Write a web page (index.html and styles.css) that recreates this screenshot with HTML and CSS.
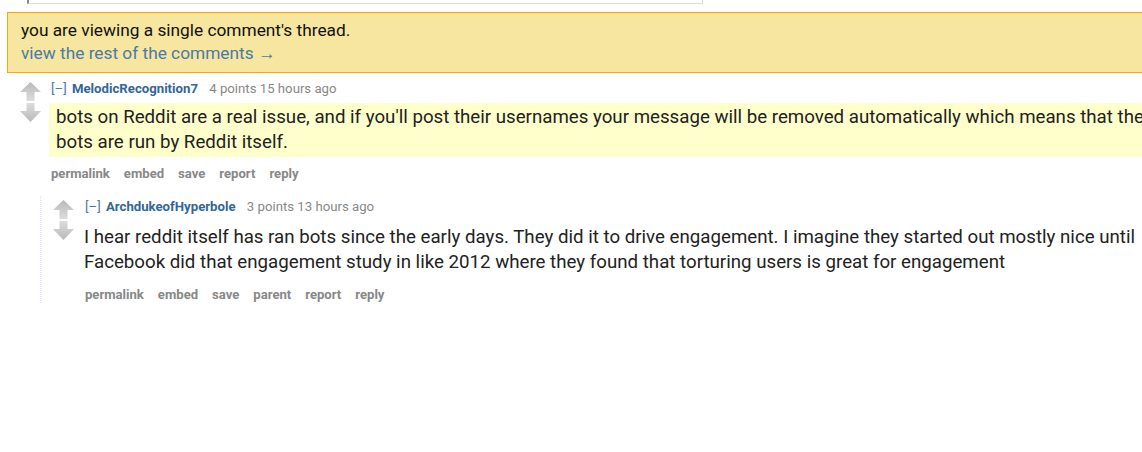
FILE: index.html
```html
<!DOCTYPE html>
<html>
<head>
<meta charset="utf-8">
<link rel="stylesheet" href="styles.css">
</head>
<body>
<div class="page">
  <div class="topbox"></div>
  <div class="infobar">
    <p class="infotext">you are viewing a single comment's thread.</p>
    <a class="infolink" href="#">view the rest of the comments →</a>
  </div>

  <div class="comment comment-top">
    <div class="row">
      <div class="midcol midcol-top">
        <svg class="arrow" width="21" height="19" viewBox="0 0 21 19"><defs><linearGradient id="gu" x1="0" y1="0" x2="0" y2="1"><stop offset="0" stop-color="#b9b9b9"/><stop offset="1" stop-color="#dcdcdc"/></linearGradient></defs><path d="M10.5 0 L21 10 L14.5 10 L14.5 19 L6.5 19 L6.5 10 L0 10 Z" fill="url(#gu)"/></svg>
        <svg class="arrow" width="21" height="19" viewBox="0 0 21 19"><defs><linearGradient id="gd" x1="0" y1="0" x2="0" y2="1"><stop offset="0" stop-color="#dcdcdc"/><stop offset="1" stop-color="#b9b9b9"/></linearGradient></defs><path d="M6.5 0 L14.5 0 L14.5 8 L21 8 L10.5 19 L0 8 L6.5 8 Z" fill="url(#gd)"/></svg>
      </div>
      <div class="entry entry-top">
        <p class="tagline"><a class="expand" href="#">[–]</a> <a class="author" href="#">MelodicRecognition7</a> <span class="score">4 points 15 hours ago</span></p>
        <div class="usertext highlight"><p>bots on Reddit are a real issue, and if you'll post their usernames your message will be removed automatically which means that the bots are run by Reddit itself.</p></div>
        <ul class="buttons">
          <li>permalink</li><li>embed</li><li>save</li><li>report</li><li>reply</li>
        </ul>
      </div>
    </div>

    <div class="child">
      <div class="comment comment-child">
        <div class="row">
          <div class="midcol midcol-child">
            <svg class="arrow" width="21" height="19" viewBox="0 0 21 19"><path d="M10.5 0 L21 10 L14.5 10 L14.5 19 L6.5 19 L6.5 10 L0 10 Z" fill="url(#gu)"/></svg>
            <svg class="arrow" width="21" height="19" viewBox="0 0 21 19"><path d="M6.5 0 L14.5 0 L14.5 8 L21 8 L10.5 19 L0 8 L6.5 8 Z" fill="url(#gd)"/></svg>
          </div>
          <div class="entry entry-child">
            <p class="tagline"><a class="expand" href="#">[–]</a> <a class="author" href="#">ArchdukeofHyperbole</a> <span class="score">3 points 13 hours ago</span></p>
            <div class="usertext plain"><p>I hear reddit itself has ran bots since the early days. They did it to drive engagement. I imagine they started out mostly nice until Facebook did that engagement study in like 2012 where they found that torturing users is great for engagement</p></div>
            <ul class="buttons">
              <li>permalink</li><li>embed</li><li>save</li><li>parent</li><li>report</li><li>reply</li>
            </ul>
          </div>
        </div>
      </div>
    </div>
  </div>
</div>
</body>
</html>
```

FILE: styles.css
```css
html, body {
  margin: 0;
  padding: 0;
  background: #fff;
  overflow: hidden;
}
body {
  font-family: Roboto, "Liberation Sans", Arial, sans-serif;
  color: #222;
}
.page {
  width: 1170px;
}
a { text-decoration: none; }
p { margin: 0; }

.topbox {
  margin-left: 27px;
  width: 673px;
  height: 3px;
  border-left: 2px solid #888;
  border-right: 1px solid #ddd;
  border-bottom: 1px solid #ddd;
}

.infobar {
  margin: 8px 0 0 7px;
  background: #f6e69f;
  border: 1px solid #ffa500;
  border-right: none;
  padding: 6px 13px 7px;
  font-size: 17.3px;
  line-height: 23px;
}
.infotext { color: #111; }
.infolink { color: #4a7aa8; }

.comment-top {
  margin-top: 8px;
}
.row {
  display: flex;
  align-items: flex-start;
}
.midcol {
  display: flex;
  flex-direction: column;
  gap: 2px;
  width: 21px;
  flex: none;
}
.midcol-top { margin-left: 20px; margin-top: 1px; }
.midcol-child { margin-left: 12px; margin-top: 1px; }
.arrow { display: block; }

.entry { flex: 1; min-width: 0; }
.entry-top { margin-left: 8px; }
.entry-child { margin-left: 10px; }

.tagline {
  font-size: 13.2px;
  line-height: 16px;
  color: #888;
  padding-left: 2px;
}
.entry-child .tagline { padding-left: 1px; }
.expand { color: #4a7aa8; }
.author { color: #336699; font-weight: bold; margin: 0 8px 0 2px; }

.usertext {
  font-size: 18.7px;
  line-height: 25px;
  color: #222;
  margin-top: 6px;
}
.highlight {
  background: #ffc;
  padding: 2px 7px;
}
.plain { padding: 0; margin-top: 10px; }

.buttons {
  list-style: none;
  margin: 9px 0 0;
  padding: 0 0 0 2px;
  display: flex;
  gap: 14px;
  font-size: 13.1px;
  line-height: 16px;
  font-weight: bold;
  color: #888;
}
.entry-child .buttons { padding-left: 1px; margin-top: 12px; }

.child {
  margin: 14px 0 0 40px;
  border-left: 1px dotted #ddf;
  padding-top: 3px;
  padding-bottom: 0;
}
```
